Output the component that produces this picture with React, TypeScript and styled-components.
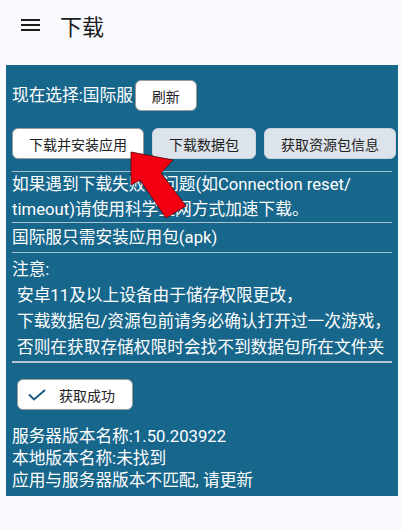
import React from 'react';
import styled, { createGlobalStyle } from 'styled-components';

const GlobalStyle = createGlobalStyle`
  html, body {
    margin: 0;
    padding: 0;
    background: #f9fafe;
    font-family: Roboto, "Noto Sans CJK SC", "Noto Sans", sans-serif;
  }
`;

const Page = styled.div`
  width: 402px;
  height: 530px;
  background: #f9fafe;
  overflow: hidden;
`;

const Header = styled.header`
  height: 50px;
  display: flex;
  align-items: center;
  padding: 0 0 15px 21px;
  gap: 20px;
`;

const MenuIcon = styled.div`
  width: 19px;
  height: 12px;
  display: flex;
  flex-direction: column;
  justify-content: space-between;
  span {
    display: block;
    height: 2px;
    background: #1c1c1c;
  }
`;

const Title = styled.h1`
  margin: 0;
  font-size: 22px;
  font-weight: 400;
  color: #1c1c1c;
`;

const Panel = styled.section`
  position: relative;
  margin: 0 4px 0 6px;
  padding: 15px 6px 4px;
  background: #17668b;
  color: #ffffff;
  font-size: 16.7px;
`;

const Row = styled.div<{ $top?: number }>`
  display: flex;
  align-items: center;
  gap: 8px;
  margin-top: ${(p) => p.$top ?? 0}px;
`;

const Label = styled.span`
  line-height: 31px;
  margin-right: -6px;
`;

const Button = styled.button<{ $muted?: boolean }>`
  height: 31px;
  padding: 0 16px;
  border-radius: 6px;
  border: 1px solid ${(p) => (p.$muted ? '#c9d0d8' : '#9a9a9a')};
  background: ${(p) => (p.$muted ? '#dde3ea' : '#ffffff')};
  color: #222;
  font-family: inherit;
  font-size: 14px;
  display: inline-flex;
  align-items: center;
  gap: 13px;
  white-space: nowrap;
`;

const IconButton = styled(Button)`
  padding: 0 17px 0 10px;
`;

const Divider = styled.hr<{ $thick?: boolean }>`
  margin: 0;
  border: none;
  height: ${(p) => (p.$thick ? 2 : 1)}px;
  background: ${(p) => (p.$thick ? '#b7c6d1' : '#a9c0ce')};
`;

const Block = styled.div<{ $lh: number; $pad?: string }>`
  line-height: ${(p) => p.$lh}px;
  padding: ${(p) => p.$pad ?? '0'};
  white-space: nowrap;
`;

const Indent = styled.div`
  padding-left: 5px;
`;

const SuccessRow = styled.div`
  margin: 16px 0 0 5px;
`;

const Arrow = styled.svg`
  position: absolute;
  left: 114px;
  top: 85px;
  width: 72px;
  height: 75px;
`;

export default function App() {
  return (
    <Page>
      <GlobalStyle />
      <Header>
        <MenuIcon>
          <span />
          <span />
          <span />
        </MenuIcon>
        <Title>下载</Title>
      </Header>
      <Panel>
        <Row>
          <Label>现在选择:国际服</Label>
          <Button>刷新</Button>
        </Row>
        <Row $top={17}>
          <Button>下载并安装应用</Button>
          <Button $muted>下载数据包</Button>
          <Button $muted>获取资源包信息</Button>
        </Row>
        <Divider style={{ marginTop: 12 }} />
        <Block $lh={25}>
          如果遇到下载失败等问题(如Connection reset/
          <br />
          timeout)请使用科学上网方式加速下载。
        </Block>
        <Divider />
        <Block $lh={25} $pad="2px 0 2px">
          国际服只需安装应用包(apk)
        </Block>
        <Divider />
        <Block $lh={26} $pad="4px 0 0">
          注意:
          <Indent>安卓11及以上设备由于储存权限更改，</Indent>
          <Indent>下载数据包/资源包前请务必确认打开过一次游戏，</Indent>
          <Indent>否则在获取存储权限时会找不到数据包所在文件夹</Indent>
        </Block>
        <Divider $thick />
        <SuccessRow>
          <IconButton>
            <svg width="18" height="12" viewBox="0 0 18 12">
              <polyline
                points="1,5.5 6,10.5 17,1"
                fill="none"
                stroke="#1b5b85"
                strokeWidth="2"
              />
            </svg>
            获取成功
          </IconButton>
        </SuccessRow>
        <Block $lh={22} $pad="16px 0 0">
          服务器版本名称:1.50.203922
          <br />
          本地版本名称:未找到
          <br />
          应用与服务器版本不匹配, 请更新
        </Block>
        <Arrow viewBox="0 0 72 75">
          <polygon
            points="11,2 53,10 41,23 66,56 46,68 20,30 11,35"
            fill="#f20012"
            stroke="#5a0000"
            strokeWidth="0.8"
            strokeLinejoin="miter"
          />
        </Arrow>
      </Panel>
    </Page>
  );
}
